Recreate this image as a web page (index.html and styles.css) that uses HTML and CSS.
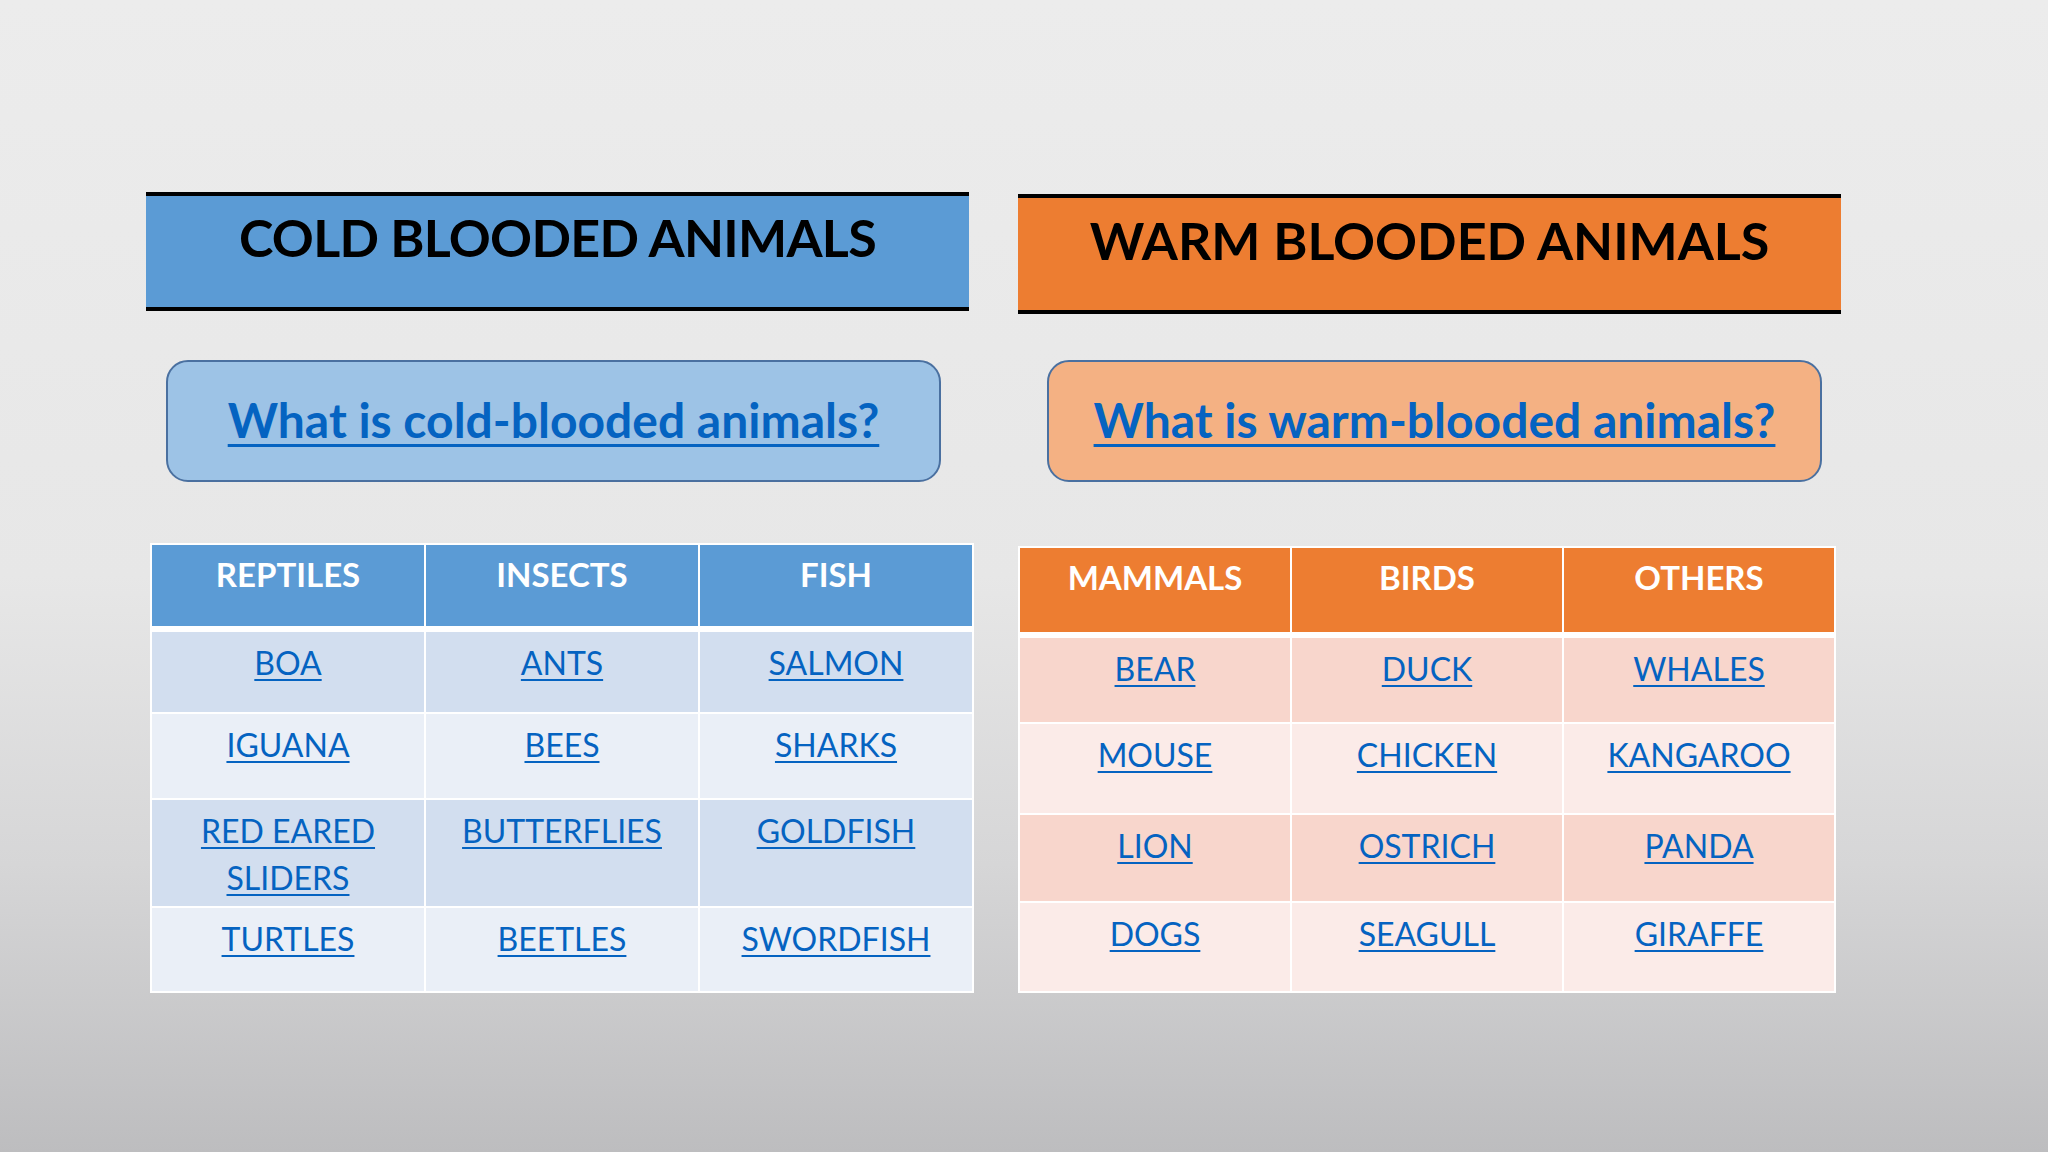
FILE: index.html
```html
<!DOCTYPE html>
<html lang="en">
<head>
<meta charset="utf-8">
<title>Cold and Warm Blooded Animals</title>
<link rel="stylesheet" href="styles.css">
</head>
<body>
<main class="slide">
  <section class="side side-cold">
    <h1 class="title">COLD BLOODED ANIMALS</h1>
    <div class="question"><a href="#">What is cold-blooded animals?</a></div>
    <div class="grid">
      <div class="row head">
        <div class="cell">REPTILES</div>
        <div class="cell">INSECTS</div>
        <div class="cell">FISH</div>
      </div>
      <div class="row odd">
        <div class="cell"><a href="#">BOA</a></div>
        <div class="cell"><a href="#">ANTS</a></div>
        <div class="cell"><a href="#">SALMON</a></div>
      </div>
      <div class="row even">
        <div class="cell"><a href="#">IGUANA</a></div>
        <div class="cell"><a href="#">BEES</a></div>
        <div class="cell"><a href="#">SHARKS</a></div>
      </div>
      <div class="row odd">
        <div class="cell"><a href="#">RED EARED<br>SLIDERS</a></div>
        <div class="cell"><a href="#">BUTTERFLIES</a></div>
        <div class="cell"><a href="#">GOLDFISH</a></div>
      </div>
      <div class="row even">
        <div class="cell"><a href="#">TURTLES</a></div>
        <div class="cell"><a href="#">BEETLES</a></div>
        <div class="cell"><a href="#">SWORDFISH</a></div>
      </div>
    </div>
  </section>

  <section class="side side-warm">
    <h1 class="title">WARM BLOODED ANIMALS</h1>
    <div class="question"><a href="#">What is warm-blooded animals?</a></div>
    <div class="grid">
      <div class="row head">
        <div class="cell">MAMMALS</div>
        <div class="cell">BIRDS</div>
        <div class="cell">OTHERS</div>
      </div>
      <div class="row odd">
        <div class="cell"><a href="#">BEAR</a></div>
        <div class="cell"><a href="#">DUCK</a></div>
        <div class="cell"><a href="#">WHALES</a></div>
      </div>
      <div class="row even">
        <div class="cell"><a href="#">MOUSE</a></div>
        <div class="cell"><a href="#">CHICKEN</a></div>
        <div class="cell"><a href="#">KANGAROO</a></div>
      </div>
      <div class="row odd">
        <div class="cell"><a href="#">LION</a></div>
        <div class="cell"><a href="#">OSTRICH</a></div>
        <div class="cell"><a href="#">PANDA</a></div>
      </div>
      <div class="row even">
        <div class="cell"><a href="#">DOGS</a></div>
        <div class="cell"><a href="#">SEAGULL</a></div>
        <div class="cell"><a href="#">GIRAFFE</a></div>
      </div>
    </div>
  </section>
</main>
</body>
</html>
```
FILE: styles.css
```css
* { box-sizing: border-box; }

html, body {
  margin: 0;
  padding: 0;
}

body {
  width: 2048px;
  height: 1152px;
  overflow: hidden;
  font-family: "Lato", "Open Sans", "Liberation Sans", sans-serif;
  background: linear-gradient(to bottom, #ececec 0%, #e7e7e7 50%, #d6d6d7 75%, #bdbdbf 100%);
}

.slide {
  display: flex;
  align-items: flex-start;
  gap: 49px;
  padding: 192px 0 0 146px;
}

.side {
  width: 823px;
  flex: none;
  display: flex;
  flex-direction: column;
}

/* Title bars */
.title {
  margin: 0;
  height: 119px;
  border-top: 4px solid #000;
  border-bottom: 4px solid #000;
  padding-top: 10px;
  font-size: 52px;
  line-height: 1.2;
  font-weight: 700;
  color: #000;
  text-align: center;
}

.side-cold .title { background: #5b9bd5; letter-spacing: -0.7px; }
.side-warm .title { background: #ed7d31; height: 120px; padding-top: 11px; }
.side-warm { padding-top: 2px; }

/* Question boxes */
.question {
  width: 775px;
  height: 122px;
  margin-top: 49px;
  border: 2px solid #4a70a0;
  border-radius: 22px;
  padding-top: 29px;
  text-align: center;
  font-size: 48px;
  line-height: 1.2;
  font-weight: 700;
}

.side-cold .question { background: #9dc3e6; margin-left: 20px; }
.side-warm .question { background: #f4b183; margin-left: 29px; margin-top: 46px; }

.question a {
  color: #0563c1;
  text-decoration: underline;
  text-decoration-thickness: 3px;
  text-underline-offset: 6px;
}

/* Tables */
.grid {
  display: grid;
  background: #ffffff;
  padding: 2px;
  gap: 2px;
}

.side-cold .grid {
  width: 824px;
  margin-top: 61px;
  margin-left: 4px;
  grid-template-columns: 272px 272px 272px;
  grid-template-rows: 85px 80px 84px 106px 83px;
}

.side-warm .grid {
  width: 818px;
  margin-top: 64px;
  grid-template-columns: 270px 270px 270px;
  grid-template-rows: 88px 84px 89px 86px 88px;
}

.row { display: contents; }

.cell {
  text-align: center;
  font-size: 32px;
  line-height: 47px;
  padding-top: 7px;
}

.head .cell {
  font-size: 33px;
  font-weight: 700;
  color: #ffffff;
  padding-top: 6px;
  border-bottom: 4px solid #ffffff;
}

.side-cold .head .cell { background: #5b9bd5; }
.side-cold .odd .cell { background: #d2deef; }
.side-cold .even .cell { background: #eaeff7; }

.side-warm .head .cell { background: #ed7d31; }
.side-warm .odd .cell { background: #f8d6cc; }
.side-warm .even .cell { background: #fbebe8; }

.cell a {
  color: #0563c1;
  text-decoration: underline;
  text-decoration-thickness: 2px;
  text-underline-offset: 4px;
}
```
